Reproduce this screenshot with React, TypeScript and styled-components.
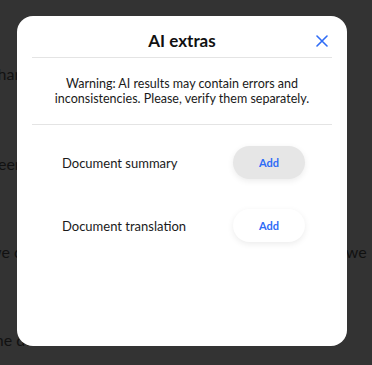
import React from 'react';
import styled, { createGlobalStyle } from 'styled-components';

/* Global =========================================================== */
const GlobalStyle = createGlobalStyle`
    html, body {
        margin: 0;
        padding: 0;
        background: #333333;
        overflow: hidden;
    }
    body {
        font-family: 'Lato', 'Noto Sans', sans-serif;
    }
`;

/* Background page =========================================================== */
const Page = styled.div`
    width: 372px;
    height: 365px;
    position: relative;
    overflow: hidden;
`;
const PageText = styled.div`
    display: flex;
    flex-direction: column;
    padding-top: 63px;
    margin-left: -11px;
    > p:nth-of-type(2) {
        margin-top: 68px;
    }
    > p:nth-of-type(3) {
        margin-top: 66px;
    }
    > p:nth-of-type(4) {
        margin-top: 66px;
    }
`;
const PageLine = styled.p`
    margin: 0;
    font-size: 16px;
    line-height: 22px;
    color: #111;
    white-space: nowrap;
`;

/* Modal =========================================================== */
const Overlay = styled.div`
    position: absolute;
    inset: 0;
    display: flex;
    align-items: flex-start;
    justify-content: flex-start;
    padding: 16px 0 0 17px;
`;
const Modal = styled.div`
    width: 330px;
    height: 330px;
    box-sizing: border-box;
    background: #fff;
    border-radius: 16px;
    padding: 0 15px;
    display: flex;
    flex-direction: column;
`;
const Header = styled.div`
    position: relative;
    height: 42px;
    display: flex;
    align-items: center;
    justify-content: center;
    border-bottom: 1px solid #e4e4e4;
    padding-top: 7px;
    box-sizing: border-box;
`;
const Title = styled.h2`
    margin: 0;
    font-size: 17px;
    font-weight: 700;
    color: #111;
`;
const CloseButton = styled.button`
    position: absolute;
    right: 2px;
    top: 17px;
    width: 16px;
    height: 16px;
    padding: 0;
    border: none;
    background: none;
    display: flex;
    align-items: center;
    justify-content: center;
    cursor: pointer;
`;
const Warning = styled.p`
    margin: 0;
    padding: 18px 10px 18px;
    border-bottom: 1px solid #e4e4e4;
    font-size: 12.5px;
    line-height: 15px;
    text-align: center;
    color: #1a1a1a;
`;
const List = styled.div`
    display: flex;
    flex-direction: column;
    gap: 30px;
    padding: 21px 27px 0 30px;
`;
const Row = styled.div`
    display: flex;
    align-items: center;
    justify-content: space-between;
`;
const RowLabel = styled.span`
    font-size: 13px;
    color: #1a1a1a;
`;
const AddButton = styled.button<{ $hover?: boolean }>`
    width: 72px;
    height: 33px;
    border: none;
    border-radius: 17px;
    background: ${(p) => (p.$hover ? '#e6e6e6' : '#fff')};
    box-shadow: 0 2px 6px rgba(0, 0, 0, 0.08);
    color: #2f6cf6;
    font-family: inherit;
    font-size: 11px;
    font-weight: 700;
    cursor: pointer;
`;

const extras = [
    { id: 'summary', label: 'Document summary', hover: true },
    { id: 'translation', label: 'Document translation', hover: false },
];

export default function App() {
    return (
        <Page>
            <GlobalStyle />
            <PageText>
                <PageLine>Share</PageLine>
                <PageLine>been</PageLine>
                <PageLine>we can see that the whole document is as they are we</PageLine>
                <PageLine>the document has been saved and sent back with</PageLine>
            </PageText>
            <Overlay>
                <Modal>
                    <Header>
                        <Title>AI extras</Title>
                        <CloseButton aria-label="Close">
                            <svg width="12" height="12" viewBox="0 0 12 12" fill="none">
                                <path d="M1 1L11 11M11 1L1 11" stroke="#2f6cf6" strokeWidth="1.6" strokeLinecap="round" />
                            </svg>
                        </CloseButton>
                    </Header>
                    <Warning>
                        Warning: AI results may contain errors and inconsistencies. Please, verify them separately.
                    </Warning>
                    <List>
                        {extras.map((item) => (
                            <Row key={item.id}>
                                <RowLabel>{item.label}</RowLabel>
                                <AddButton $hover={item.hover}>Add</AddButton>
                            </Row>
                        ))}
                    </List>
                </Modal>
            </Overlay>
        </Page>
    );
}
